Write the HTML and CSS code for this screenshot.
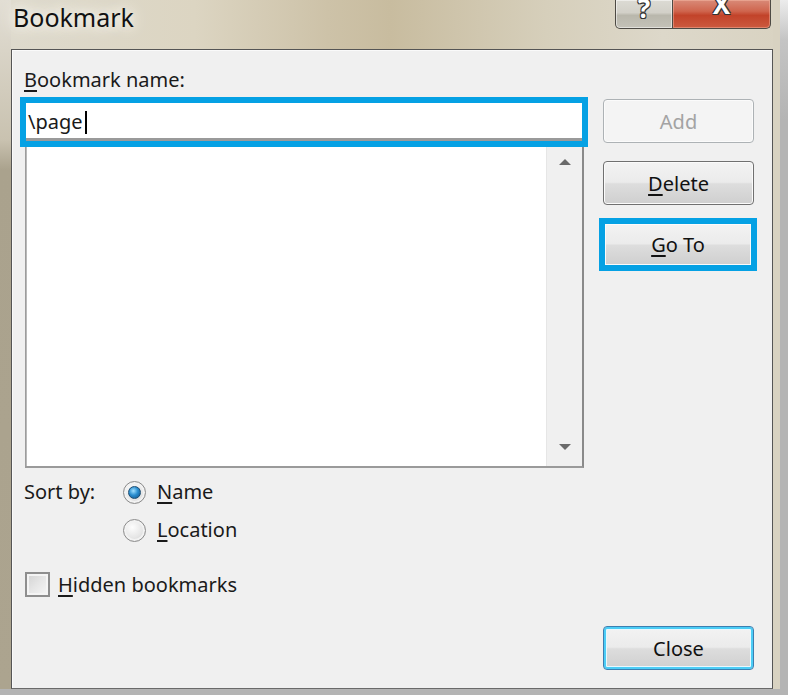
FILE: index.html
```html
<!DOCTYPE html>
<html lang="en">
<head>
  <meta charset="UTF-8">
  <title>Bookmark</title>
  <link rel="stylesheet" href="styles.css">
</head>
<body>
  <div class="window">
    <div class="titlebar">
      <span class="title">Bookmark</span>
      <div class="caption">
        <span class="cap-btn help"><span class="glyph">?</span></span>
        <span class="cap-btn close-x"><span class="glyph">X</span></span>
      </div>
    </div>

    <!-- dialog body -->
    <div class="client">
      <div class="left">
        <div class="field-label"><u>B</u>ookmark name:</div>
        <div class="hl hl-input">
          <div class="name-input">\page<span class="caret"></span></div>
        </div>
        <div class="list">
          <div class="list-body"></div>
          <div class="scrollbar">
            <span class="arrow up"></span>
            <span class="arrow down"></span>
          </div>
        </div>

        <div class="sort">
          <span class="sort-label">Sort by:</span>
          <div class="radios">
            <div class="radio-row"><span class="radio checked"></span><span><u>N</u>ame</span></div>
            <div class="radio-row"><span class="radio"></span><span><u>L</u>ocation</span></div>
          </div>
        </div>

        <div class="check-row"><span class="checkbox"></span><span><u>H</u>idden bookmarks</span></div>
      </div>

      <div class="right">
        <button class="btn" disabled>Add</button>
        <button class="btn btn-delete"><u>D</u>elete</button>
        <div class="hl hl-btn">
          <button class="btn btn-goto"><u>G</u>o To</button>
        </div>
        <button class="btn btn-close">Close</button>
      </div>
    </div>
  </div>
</body>
</html>
```

FILE: styles.css
```css
html, body {
  margin: 0;
  padding: 0;
}
body {
  width: 788px;
  height: 695px;
  overflow: hidden;
  background: linear-gradient(180deg, #ececec 0px, #c4c4c4 40px, #b4b4b4 120px);
  font-family: 'Noto Sans', 'Open Sans', sans-serif;
  color: #1a1a1a;
}
u {
  text-decoration: underline;
  text-underline-offset: 3px;
}
.window {
  width: 780px;
  height: 689px;
  padding: 0 7px 0 11px;
  box-sizing: border-box;
  display: flex;
  flex-direction: column;
  background:
    linear-gradient(180deg, #e2ded4 0px, #c9c2b0 140px, #aaa28d 170px, #aca48f 100%) left top / 11px 100% no-repeat,
    linear-gradient(180deg, #d8d2c1 0px, #d8d2c1 100%) right top / 7px 100% no-repeat,
    linear-gradient(90deg, #dedacd 0%, #dcd5c2 25%, #cdc2a8 42%, #c8bc9f 50%, #d6cfbb 70%, #ddd8ca 85%, #d9d3c2 100%);
}
.titlebar {
  height: 49px;
  flex: none;
  display: flex;
  justify-content: space-between;
  align-items: flex-start;
  margin-left: -11px;
}
.title {
  margin: 1px 0 0 13px;
  font-size: 25px;
  line-height: 32px;
  color: #111;
  text-shadow: 0 0 8px #f4f2ec, 0 0 14px #f4f2ec, 0 0 20px #f0ede4;
}
.caption {
  display: flex;
  margin-right: 2px;
}
.cap-btn {
  height: 29px;
  overflow: hidden;
  display: flex;
  justify-content: center;
  box-sizing: border-box;
  border: 1px solid #4d4a44;
  border-top: none;
  font-weight: bold;
  color: #fff;
  text-shadow: 1px 1px 0 #333, -1px -1px 0 #333, 1px -1px 0 #333, -1px 1px 0 #333, 0 1px 0 #333, 0 -1px 0 #333;
}
.help {
  width: 58px;
  border-radius: 0 0 0 5px;
  background: linear-gradient(180deg, #dcdbd4 0%, #d2d0c8 45%, #b9b7ac 55%, #c4c2b8 100%);
  box-shadow: inset 0 0 0 1px rgba(255,255,255,0.5);
}
.close-x {
  width: 98px;
  border-left: none;
  border-radius: 0 0 5px 0;
  background: linear-gradient(180deg, #d98a78 0%, #cf654e 40%, #c2432a 55%, #cc5a3f 100%);
  box-shadow: inset 0 0 0 1px rgba(255,200,180,0.4);
}
.help .glyph {
  font-size: 26px;
  line-height: 26px;
  margin-top: -5px;
}
.close-x .glyph {
  font-size: 26px;
  line-height: 26px;
  margin-top: -9px;
}

.client {
  flex: 1;
  display: grid;
  grid-template-columns: 568px 151px;
  column-gap: 15px;
  padding: 0 18px 0 8px;
  background: #f0f0f0;
  border: 1px solid #555;
  border-bottom-color: #6a6a6a;
  box-shadow: inset 1px 1px 0 #fafafa;
  font-size: 20px;
}
.left {
  padding-top: 18px;
  display: flex;
  flex-direction: column;
}
.field-label {
  line-height: 24px;
  padding-left: 4px;
}
.hl {
  border: 6px solid #05a1e4;
  box-sizing: border-box;
}
.hl-input {
  margin-top: 5px;
  height: 50px;
  flex: none;
}
.name-input {
  height: 38px;
  box-sizing: border-box;
  background: #fff;
  border-bottom: 3px solid #9a9a9a;
  padding: 3px 0 0 2px;
  line-height: 28px;
  display: flex;
  align-items: center;
}
.caret {
  display: inline-block;
  width: 2px;
  height: 23px;
  background: #000;
  margin-left: 2px;
}
.list {
  height: 321px;
  flex: none;
  margin: 0 4px 0 5px;
  display: flex;
  background: #fff;
  border: 1px solid #9c9c9c;
  border-top: none;
  border-right: 2px solid #8a8a8a;
  border-bottom: 2px solid #9a9a9a;
  box-sizing: border-box;
  box-shadow: inset 1px 0 0 #b9b9b9;
}
.list-body {
  flex: 1;
}
.scrollbar {
  width: 35px;
  background: #f0f0f0;
  border-left: 1px solid #e6e6e6;
  display: flex;
  flex-direction: column;
  justify-content: space-between;
  align-items: center;
  padding: 12px 0 16px;
}
.arrow {
  width: 0;
  height: 0;
  border-left: 6px solid transparent;
  border-right: 6px solid transparent;
}
.arrow.up {
  border-bottom: 6px solid #6a6a6a;
}
.arrow.down {
  border-top: 6px solid #6a6a6a;
}

.sort {
  margin-top: 12px;
  display: flex;
  padding-left: 4px;
}
.sort-label {
  line-height: 24px;
  width: 99px;
}
.radios {
  display: flex;
  flex-direction: column;
  gap: 14px;
}
.radio-row, .check-row {
  display: flex;
  align-items: center;
  gap: 11px;
  line-height: 24px;
}
.radio {
  width: 23px;
  height: 23px;
  box-sizing: border-box;
  border-radius: 50%;
  border: 1px solid #8c8c8c;
  background: radial-gradient(circle at 40% 35%, #fdfdfd 0%, #e6e6e6 55%, #c9c9c9 100%);
  box-shadow: inset 0 0 0 2px #f2f2f2;
  display: flex;
  align-items: center;
  justify-content: center;
}
.radio.checked::after {
  content: "";
  width: 11px;
  height: 11px;
  border-radius: 50%;
  border: 1px solid #1c4d72;
  background: radial-gradient(circle at 40% 35%, #9fe0ff 0%, #2a8ed0 45%, #0c4f86 100%);
}
.check-row {
  margin-top: 30px;
  padding-left: 5px;
  gap: 8px;
}
.checkbox {
  width: 25px;
  height: 25px;
  box-sizing: border-box;
  border: 2px solid #8e8e8e;
  background: linear-gradient(135deg, #d2d2d2 0%, #e6e6e6 50%, #f6f6f6 100%);
  box-shadow: inset 0 0 0 2px #f4f4f4;
}

.right {
  padding: 49px 0 17px;
  display: flex;
  flex-direction: column;
}
.btn {
  width: 151px;
  height: 44px;
  flex: none;
  border: 1px solid #707070;
  border-radius: 4px;
  background: linear-gradient(180deg, #f3f3f3 0%, #ebebeb 48%, #dddddd 52%, #cfcfcf 100%);
  box-shadow: inset 0 0 0 1px #fbfbfb;
  font-family: 'Noto Sans', 'Open Sans', sans-serif;
  font-size: 20px;
  color: #111;
  padding: 0;
}
.btn:disabled {
  border-color: #adb2b5;
  background: #f4f4f4;
  color: #a3a3a3;
}
.btn-delete {
  margin-top: 18px;
}
.hl-btn {
  margin: 13px 0 0 -4px;
  width: 158px;
  height: 53px;
}
.btn-goto {
  width: 146px;
  height: 41px;
  border: none;
  border-radius: 0;
}
.btn-close {
  margin-top: auto;
  margin-bottom: 1px;
  border-color: #3c7fb1;
  box-shadow: inset 0 0 0 2px #4ccdf6, inset 0 0 0 3px #e8f8fe;
}
```
